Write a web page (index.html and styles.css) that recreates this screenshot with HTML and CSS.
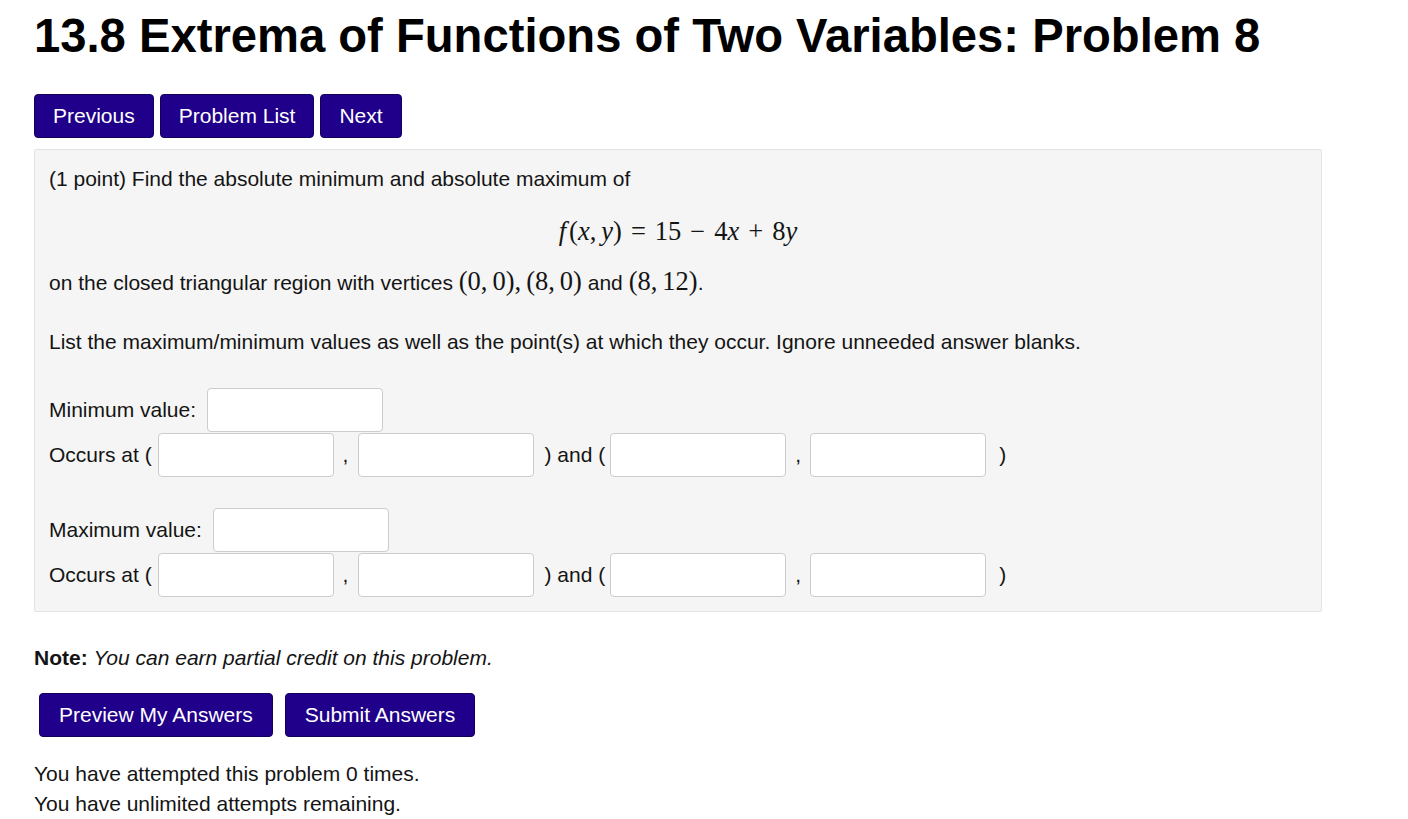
FILE: index.html
```html
<!DOCTYPE html>
<html>
<head>
<meta charset="utf-8">
<link rel="stylesheet" href="styles.css">
</head>
<body>
<div class="page">
  <h1 class="title">13.8 Extrema of Functions of Two Variables: Problem 8</h1>
  <div class="nav">
    <button class="btn">Previous</button>
    <button class="btn">Problem List</button>
    <button class="btn">Next</button>
  </div>
  <div class="problem">
    <p class="line">(1 point) Find the absolute minimum and absolute maximum of</p>
    <div class="display"><span class="math"><i class="f">f</i>(<i>x</i>,<span class="th"></span><i>y</i>)<span class="op">=</span>15<span class="op">−</span>4<i>x</i><span class="op">+</span>8<i>y</i></span></div>
    <p class="line">on the closed triangular region with vertices <span class="math">(0,<span class="th"></span>0),<span class="th"></span>(8,<span class="th"></span>0)</span> and <span class="math">(8,<span class="th"></span>12)</span>.</p>
    <p class="line gap">List the maximum/minimum values as well as the point(s) at which they occur. Ignore unneeded answer blanks.</p>
    <div class="answers">
      <div class="row"><span class="lbl">Minimum value:</span><input class="box" type="text"></div>
      <div class="row">Occurs at ( <input class="box" type="text"> <span class="comma">,</span> <input class="box" type="text"> <span class="sep">) and (</span> <input class="box" type="text"> <span class="comma">,</span> <input class="box" type="text"> <span class="close">)</span></div>
    </div>
    <div class="answers second">
      <div class="row"><span class="lbl">Maximum value:</span><input class="box" type="text"></div>
      <div class="row">Occurs at ( <input class="box" type="text"> <span class="comma">,</span> <input class="box" type="text"> <span class="sep">) and (</span> <input class="box" type="text"> <span class="comma">,</span> <input class="box" type="text"> <span class="close">)</span></div>
    </div>
  </div>
  <p class="note"><b>Note:</b> <i>You can earn partial credit on this problem.</i></p>
  <div class="submit">
    <button class="btn big">Preview My Answers</button>
    <button class="btn big">Submit Answers</button>
  </div>
  <div class="attempts">
    <div>You have attempted this problem 0 times.</div>
    <div>You have unlimited attempts remaining.</div>
  </div>
</div>
</body>
</html>
```
FILE: styles.css
```css
html, body {
  margin: 0;
  padding: 0;
  background: #fff;
}
body {
  font-family: "Liberation Sans", Arial, sans-serif;
  font-size: 21px;
  color: #141414;
}
.page {
  padding: 0 0 0 34px;
  width: 1288px;
}
.title {
  font-size: 47.2px;
  font-weight: bold;
  margin: 0;
  padding-top: 10px;
  line-height: 52px;
  color: #000;
}
.nav {
  display: flex;
  gap: 6px;
  margin-top: 32px;
}
.btn {
  font-family: "Liberation Sans", Arial, sans-serif;
  font-size: 21px;
  color: #fff;
  background: #20008a;
  border: 1px solid #13005a;
  border-radius: 4px;
  height: 44px;
  padding: 0 18px;
}
.problem {
  margin-top: 11px;
  background: #f5f5f5;
  border: 1px solid #e3e3e3;
  border-radius: 2px;
  padding: 14px 14px 14px 14px;
}
.line {
  margin: 0;
  line-height: 30px;
}
.line.gap {
  margin-top: 29px;
}
.display {
  text-align: center;
  margin: 24px 0 20px;
  line-height: 30px;
}
.math {
  font-family: "Liberation Serif", "DejaVu Serif", serif;
  font-size: 26.5px;
  line-height: 20px;
}
.math i {
  font-style: italic;
}
.math i.f {
  margin-right: 3px;
}
.th {
  display: inline-block;
  width: 5px;
}
.op {
  padding: 0 9px;
}
.answers {
  margin-top: 30px;
}
.answers.second {
  margin-top: 30px;
}
.row {
  display: flex;
  align-items: center;
  height: 45px;
  white-space: pre;
}
.lbl {
  margin-right: 11px;
}
.box {
  width: 176px;
  height: 44px;
  box-sizing: border-box;
  border: 1px solid #ccc;
  border-radius: 4px;
  background: #fff;
  margin: 0;
  padding: 0 6px;
  font-size: 20px;
}
.comma {
  width: 24px;
  text-align: center;
}
.sep {
  padding: 0 5px 0 11px;
}
.close {
  padding-left: 13px;
}
.note {
  margin: 31px 0 0;
  line-height: 30px;
}
.submit {
  display: flex;
  gap: 12px;
  margin: 20px 0 0 5px;
}
.btn.big {
  padding: 0 19px;
}
.attempts {
  margin-top: 22px;
  line-height: 30px;
}
```
